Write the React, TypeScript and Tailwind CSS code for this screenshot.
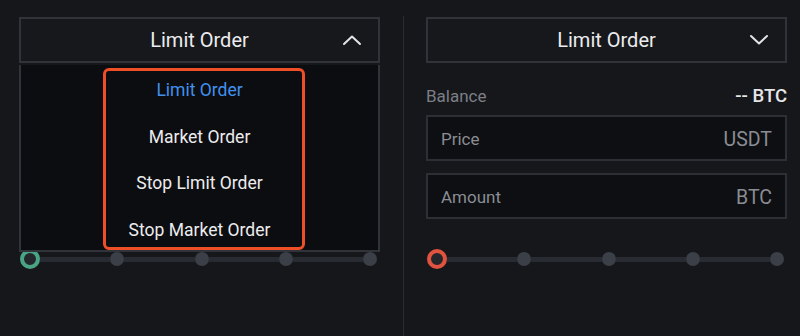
import React from "react";

function ChevronUp() {
  return (
    <svg width="20" height="12" viewBox="0 0 20 12" fill="none">
      <path d="M2 10 L10 2.5 L18 10" stroke="#e4e4e6" strokeWidth="2" strokeLinecap="round" strokeLinejoin="round" />
    </svg>
  );
}

function ChevronDown() {
  return (
    <svg width="20" height="12" viewBox="0 0 20 12" fill="none">
      <path d="M2 2 L10 9.5 L18 2" stroke="#e4e4e6" strokeWidth="2" strokeLinecap="round" strokeLinejoin="round" />
    </svg>
  );
}

function Slider({ ring }: { ring: string }) {
  const Seg = () => <div className="h-[5px] flex-1 bg-[#282b31]" />;
  const Dot = () => <div className="h-[14px] w-[14px] shrink-0 rounded-full bg-[#3b3f47]" />;
  return (
    <div className="flex h-[20px] items-center pl-[1px] pr-[3px]">
      <div className={`h-[20px] w-[20px] shrink-0 rounded-full border-[4px] bg-[#23262b] ${ring}`} />
      <Seg />
      <Dot />
      <Seg />
      <Dot />
      <Seg />
      <Dot />
      <Seg />
      <Dot />
    </div>
  );
}

function Panel({ open, ring }: { open: boolean; ring: string }) {
  return (
    <div className="relative flex w-[361px] flex-col pt-[17px]">
      <div className="relative flex h-[46px] items-center justify-center border-2 border-[#303339] bg-[#17181c]">
        <span className="text-[20px] font-normal text-[#ececee]">Limit Order</span>
        <div className="absolute right-[16px] top-1/2 -translate-y-1/2">
          {open ? <ChevronUp /> : <ChevronDown />}
        </div>
      </div>
      <div className="mt-[24px] flex h-[20px] items-center justify-between">
        <span className="text-[17px] text-[#7c7f86]">Balance</span>
        <span className="text-[18.5px] font-medium text-[#e6e6e8]">-- BTC</span>
      </div>
      <div className="mt-[8px] flex h-[46px] items-center justify-between border-2 border-[#2c2f35] bg-[#0e0f12] px-[13px] pt-[3px]">
        <span className="text-[17px] text-[#8a8d93]">Price</span>
        <span className="text-[19.5px] text-[#8a8d93]">USDT</span>
      </div>
      <div className="mt-[12px] flex h-[46px] items-center justify-between border-2 border-[#2c2f35] bg-[#0e0f12] px-[13px] pt-[3px]">
        <span className="text-[17px] text-[#8a8d93]">Amount</span>
        <span className="text-[19.5px] text-[#8a8d93]">BTC</span>
      </div>
      <div className="mt-[30px]">
        <Slider ring={ring} />
      </div>

      {open && (
        <div className="absolute left-0 top-[65px] z-10 flex h-[187px] w-[361px] flex-col overflow-hidden border-x-2 border-b-2 border-[#303339] bg-[#0c0d10] pt-[2px]">
          <div className="flex h-[46.5px] shrink-0 items-center justify-center text-[17.5px] text-[#4190ef]">Limit Order</div>
          <div className="flex h-[46.5px] shrink-0 items-center justify-center text-[17.5px] text-[#ececee]">Market Order</div>
          <div className="flex h-[46.5px] shrink-0 items-center justify-center text-[17.5px] text-[#ececee]">Stop Limit Order</div>
          <div className="flex h-[46.5px] shrink-0 items-center justify-center text-[17.5px] text-[#ececee]">Stop Market Order</div>
          <div className="pointer-events-none absolute left-[82px] top-[3px] h-[182px] w-[202px] rounded-[6px] border-[3px] border-[#ee4f27]" />
        </div>
      )}
    </div>
  );
}

export default function App() {
  return (
    <div
      className="flex h-[336px] w-[800px] overflow-hidden bg-[#16171b] pl-[19px]"
      style={{ fontFamily: "Roboto, 'Noto Sans', sans-serif" }}
    >
      <Panel open ring="border-[#4ba385]" />
      <div className="ml-[23px] mr-[22px] mt-[16px] w-px bg-[#2a2c31]" />
      <div className="w-[360px]">
        <Panel open={false} ring="border-[#e0533f]" />
      </div>
    </div>
  );
}
